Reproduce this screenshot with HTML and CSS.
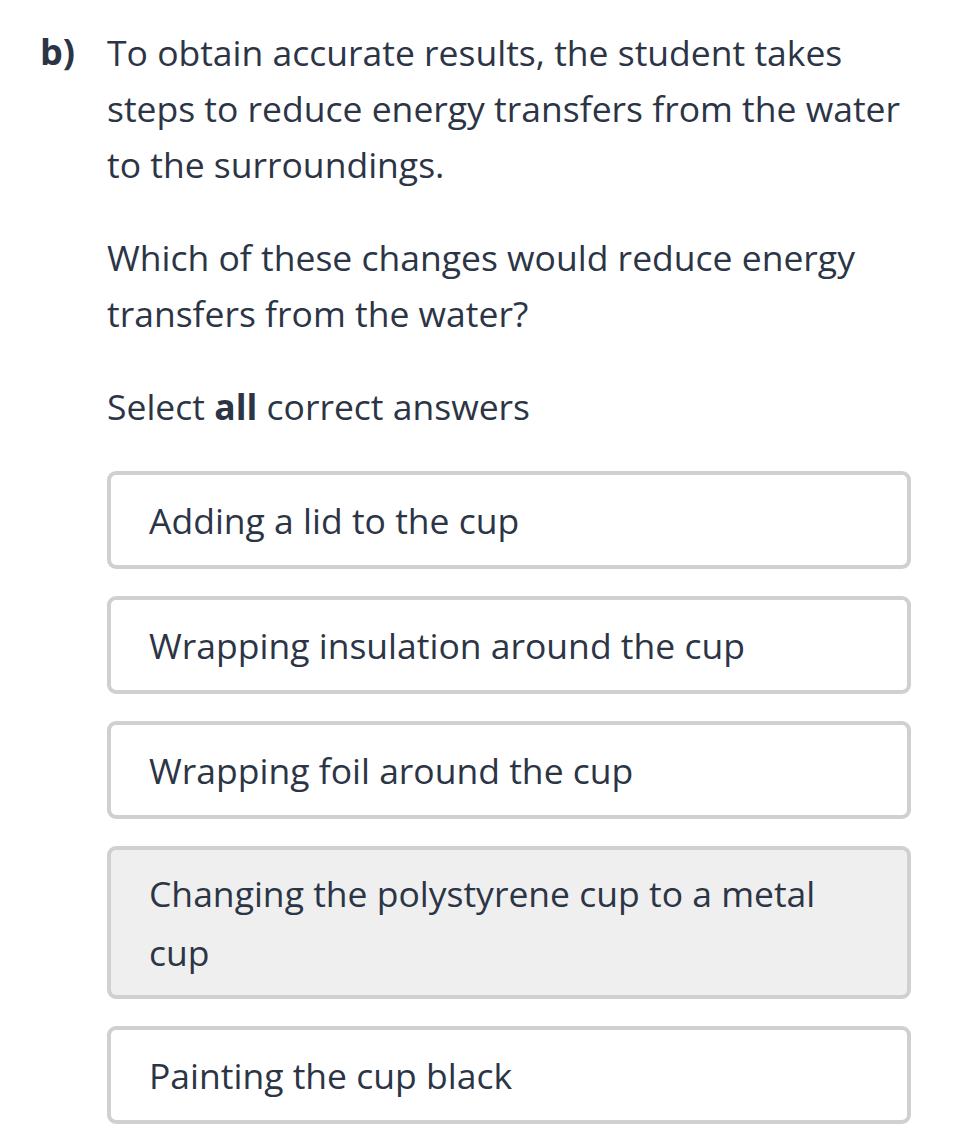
FILE: index.html
```html
<!DOCTYPE html>
<html lang="en">
<head>
  <meta charset="UTF-8">
  <title>Question b</title>
  <link rel="stylesheet" href="styles.css">
</head>
<body>
  <div class="question">
    <div class="label">b)</div>
    <div class="body">
      <p>To obtain accurate results, the student takes steps to reduce energy transfers from the water to the surroundings.</p>
      <p>Which of these changes would reduce energy transfers from the water?</p>
      <p>Select <strong>all</strong> correct answers</p>

      <!-- answer options -->
      <ul class="options">
        <li class="option">Adding a lid to the cup</li>
        <li class="option">Wrapping insulation around the cup</li>
        <li class="option">Wrapping foil around the cup</li>
        <li class="option selected">Changing the polystyrene cup to a metal cup</li>
        <li class="option">Painting the cup black</li>
      </ul>
    </div>
  </div>
</body>
</html>
```

FILE: styles.css
```css
* {
  margin: 0;
  padding: 0;
  box-sizing: border-box;
}
body {
  font-family: 'Open Sans', sans-serif;
  background: #fff;
  color: #2c3546;
  width: 971px;
}

.question {
  display: flex;
  padding: 24px 60px 0 40px;
}
.label {
  width: 67px;
  flex: none;
  font-size: 36px;
  font-weight: 700;
  line-height: 56px;
}
.body {
  flex: 1;
}
.body p {
  font-size: 35.5px;
  line-height: 56px;
  margin-bottom: 37px;
}
.body strong {
  font-weight: 700;
}

/* options */
.options {
  list-style: none;
  display: flex;
  flex-direction: column;
  gap: 27px;
}
.option {
  border: 4px solid #d0d0d0;
  border-radius: 9px;
  padding: 13.5px 50px 13.5px 38px;
  min-height: 98px;
  font-size: 35.5px;
  line-height: 59px;
  display: flex;
  align-items: center;
}
.option.selected {
  background: #efefef;
}
```
